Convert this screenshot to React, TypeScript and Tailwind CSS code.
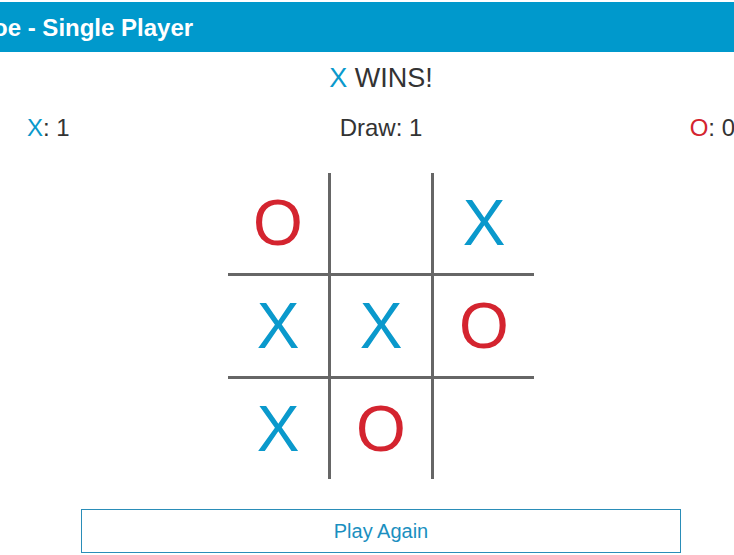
type Mark = "X" | "O" | "";

const board: Mark[] = ["O", "", "X", "X", "X", "O", "X", "O", ""];

function MarkText({ m }: { m: Mark }) {
  if (m === "X") return <span className="text-[#0a99cc]">X</span>;
  if (m === "O") return <span className="text-[#d4242f]">O</span>;
  return null;
}

function Board() {
  return (
    <div className="mx-auto grid w-[306px] grid-cols-[100px_100px_100px] gap-[3px] bg-[#666666]">
      {board.map((m, i) => (
        <div
          key={i}
          className="flex h-[100px] w-[100px] items-center justify-center bg-white text-[64px] leading-none"
        >
          <MarkText m={m} />
        </div>
      ))}
    </div>
  );
}

export default function App() {
  return (
    <div
      className="h-[555px] w-[734px] overflow-hidden bg-white text-[#333333]"
      style={{ fontFamily: '"Liberation Sans", Arial, sans-serif' }}
    >
      <div className="w-[762px]">
        <header className="mt-[2px] flex h-[50px] items-center overflow-hidden bg-[#0099cc] pt-[2px]">
          <span className="ml-[-107px] whitespace-nowrap text-[24px] font-bold text-white">
            Tic Tac Toe - Single Player
          </span>
        </header>

        <div className="flex h-[52px] items-center justify-center text-[27px]">
          <span className="text-[#0a99cc]">X</span>
          <span>&nbsp;WINS!</span>
        </div>

        <div className="grid h-[48px] grid-cols-3 items-center px-[27px] text-[24px]">
          <div className="text-left whitespace-nowrap">
            <span className="text-[#0a99cc]">X</span>: 1
          </div>
          <div className="text-center whitespace-nowrap">Draw: 1</div>
          <div className="text-right whitespace-nowrap">
            <span className="text-[#d4242f]">O</span>: 0
          </div>
        </div>

        <div className="mt-[21px]">
          <Board />
        </div>

        <div className="mt-[30px] flex justify-center">
          <button className="h-[44px] w-[600px] border border-[#2a8db8] bg-white text-[20px] text-[#1a8fc0]">
            Play Again
          </button>
        </div>
      </div>
    </div>
  );
}
